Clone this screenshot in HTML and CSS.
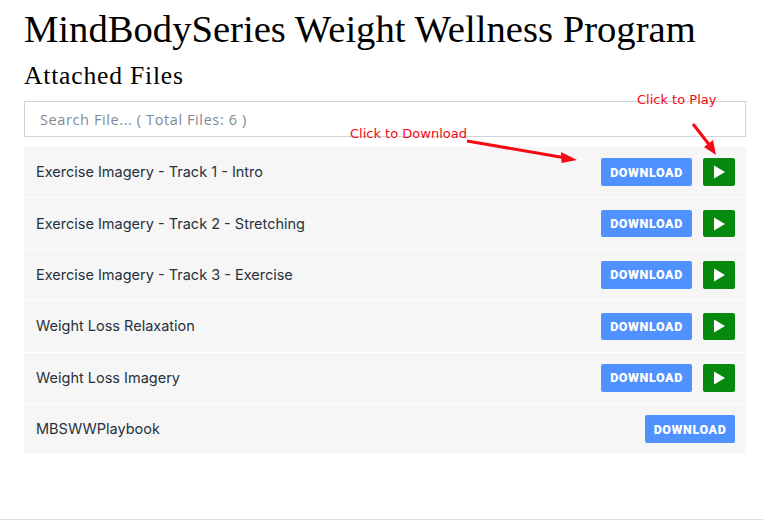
FILE: index.html
```html
<!DOCTYPE html>
<html lang="en">
<head>
<meta charset="utf-8">
<title>MindBodySeries Weight Wellness Program</title>
<link rel="stylesheet" href="styles.css">
</head>
<body>
<main class="page">
  <h1 class="title">MindBodySeries Weight Wellness Program</h1>
  <h2 class="subtitle">Attached Files</h2>
  <div class="search">Search File... ( Total Files: 6 )</div>
  <ul class="files">
    <li class="file"><span class="name">Exercise Imagery - Track 1 - Intro</span><a class="btn download">DOWNLOAD</a><a class="btn play"><svg viewBox="0 0 11 14" width="11" height="14"><path d="M0 0.500 L11 7 L0 13.500 Z" fill="#fff"/></svg></a></li>
    <li class="file"><span class="name">Exercise Imagery - Track 2 - Stretching</span><a class="btn download">DOWNLOAD</a><a class="btn play"><svg viewBox="0 0 11 14" width="11" height="14"><path d="M0 0.500 L11 7 L0 13.500 Z" fill="#fff"/></svg></a></li>
    <li class="file"><span class="name">Exercise Imagery - Track 3 - Exercise</span><a class="btn download">DOWNLOAD</a><a class="btn play"><svg viewBox="0 0 11 14" width="11" height="14"><path d="M0 0.500 L11 7 L0 13.500 Z" fill="#fff"/></svg></a></li>
    <li class="file"><span class="name">Weight Loss Relaxation</span><a class="btn download">DOWNLOAD</a><a class="btn play"><svg viewBox="0 0 11 14" width="11" height="14"><path d="M0 0.500 L11 7 L0 13.500 Z" fill="#fff"/></svg></a></li>
    <li class="file"><span class="name">Weight Loss Imagery</span><a class="btn download">DOWNLOAD</a><a class="btn play"><svg viewBox="0 0 11 14" width="11" height="14"><path d="M0 0.500 L11 7 L0 13.500 Z" fill="#fff"/></svg></a></li>
    <li class="file"><span class="name">MBSWWPlaybook</span><a class="btn download solo">DOWNLOAD</a></li>
  </ul>
</main>
<footer class="rule"></footer>
<span class="note note-download">Click to Download</span>
<span class="note note-play">Click to Play</span>
<svg class="arrows" width="763" height="526" viewBox="0 0 763 526">
  <path d="M467 141 L566 158" stroke="#f40a12" stroke-width="3" fill="none"/>
  <path d="M577 160 L561 152 L561.500 163 Z" fill="#f40a12"/>
  <path d="M693 124 L711 147" stroke="#f40a12" stroke-width="3" fill="none"/>
  <path d="M716 155 L713 140 L704 147 Z" fill="#f40a12"/>
</svg>
</body>
</html>
```

FILE: styles.css
```css
* { box-sizing: border-box; }
html, body { margin: 0; padding: 0; background: #fff; }
body { height: 526px; overflow: hidden; position: relative; font-family: "Liberation Serif", serif; }
.page { padding: 0 17px 0 24px; }
.title { margin: 0; padding-top: 7px; font-size: 38.650px; line-height: 44px; font-weight: 400; color: #000; }
.subtitle { margin: 0; padding-top: 10px; font-size: 25.600px; line-height: 30px; font-weight: 400; letter-spacing: 0.8px; color: #000; }
.search { margin-top: 10px; height: 36px; border: 1px solid #ced4da; padding: 0 15px; display: flex; align-items: center; font-family: "Open Sans", sans-serif; font-size: 14.500px; letter-spacing: 0.6px; color: #808a96; }
.files { list-style: none; margin: 10px 0 0; padding: 0; display: flex; flex-direction: column; gap: 1px; }
.file { height: 50.400px; background: #f6f6f6; display: flex; align-items: center; gap: 11px; padding: 0 11px 0 12px; }
.name { margin: -1px auto 0 0; font-family: Inter, sans-serif; font-size: 14.500px; color: #27313c; }
.btn { height: 27.500px; border-radius: 2px; display: flex; align-items: center; justify-content: center; }
.download { width: 91px; background: #4f91ff; color: #fff; font-family: Roboto, sans-serif; font-weight: 900; font-size: 12.500px; letter-spacing: 0.6px; }
.solo { width: 90px; }
.play { width: 32px; background: #068a0e; }
.rule { position: absolute; left: 0; right: 0; top: 519px; height: 1px; background: #dedede; }
.note { position: absolute; font-family: "DejaVu Sans", sans-serif; font-size: 13px; line-height: 14px; color: #f40a12; white-space: nowrap; }
.note-download { left: 350px; top: 127px; }
.note-play { left: 637px; top: 93px; }
.arrows { position: absolute; left: 0; top: 0; pointer-events: none; }
```
